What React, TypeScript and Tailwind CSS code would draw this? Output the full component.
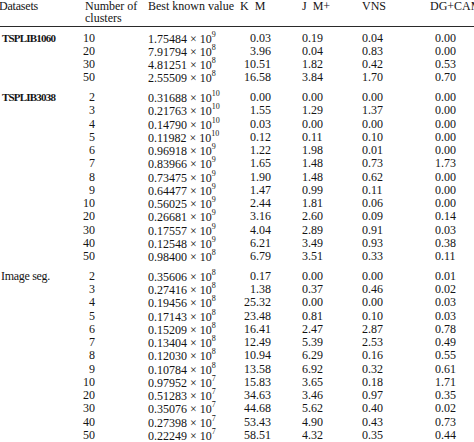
import React from "react";

type Row = [string, string, string, string, string, string, string];

const groups: { name: string; bold: boolean; rows: Row[] }[] = [
  {
    name: "TSPLIB1060",
    bold: true,
    rows: [
      ["10", "1.75484", "9", "0.03", "0.19", "0.04", "0.00"],
      ["20", "7.91794", "8", "3.96", "0.04", "0.83", "0.00"],
      ["30", "4.81251", "8", "10.51", "1.82", "0.42", "0.53"],
      ["50", "2.55509", "8", "16.58", "3.84", "1.70", "0.70"],
    ],
  },
  {
    name: "TSPLIB3038",
    bold: true,
    rows: [
      ["2", "0.31688", "10", "0.00", "0.00", "0.00", "0.00"],
      ["3", "0.21763", "10", "1.55", "1.29", "1.37", "0.00"],
      ["4", "0.14790", "10", "0.03", "0.00", "0.00", "0.00"],
      ["5", "0.11982", "10", "0.12", "0.11", "0.10", "0.00"],
      ["6", "0.96918", "9", "1.22", "1.98", "0.01", "0.00"],
      ["7", "0.83966", "9", "1.65", "1.48", "0.73", "1.73"],
      ["8", "0.73475", "9", "1.90", "1.48", "0.62", "0.00"],
      ["9", "0.64477", "9", "1.47", "0.99", "0.11", "0.00"],
      ["10", "0.56025", "9", "2.44", "1.81", "0.06", "0.00"],
      ["20", "0.26681", "9", "3.16", "2.60", "0.09", "0.14"],
      ["30", "0.17557", "9", "4.04", "2.89", "0.91", "0.03"],
      ["40", "0.12548", "9", "6.21", "3.49", "0.93", "0.38"],
      ["50", "0.98400", "8", "6.79", "3.51", "0.33", "0.11"],
    ],
  },
  {
    name: "Image seg.",
    bold: false,
    rows: [
      ["2", "0.35606", "8", "0.17", "0.00", "0.00", "0.01"],
      ["3", "0.27416", "8", "1.38", "0.37", "0.46", "0.02"],
      ["4", "0.19456", "8", "25.32", "0.00", "0.00", "0.03"],
      ["5", "0.17143", "8", "23.48", "0.81", "0.10", "0.03"],
      ["6", "0.15209", "8", "16.41", "2.47", "2.87", "0.78"],
      ["7", "0.13404", "8", "12.49", "5.39", "2.53", "0.49"],
      ["8", "0.12030", "8", "10.94", "6.29", "0.16", "0.55"],
      ["9", "0.10784", "8", "13.58", "6.92", "0.32", "0.61"],
      ["10", "0.97952", "7", "15.83", "3.65", "0.18", "1.71"],
      ["20", "0.51283", "7", "34.63", "3.46", "0.97", "0.35"],
      ["30", "0.35076", "7", "44.68", "5.62", "0.40", "0.02"],
      ["40", "0.27398", "7", "53.43", "4.90", "0.43", "0.73"],
      ["50", "0.22249", "7", "58.51", "4.32", "0.35", "0.44"],
    ],
  },
];

const cols = "grid grid-cols-[84px_64px_92px_62px_60px_68px_1fr]";

export default function App() {
  return (
    <div className="w-[474px] h-[442px] overflow-hidden bg-white text-[#141414] text-[12px] font-['Liberation_Serif','Times_New_Roman',serif]">
      <div className={`${cols} leading-[12px] whitespace-nowrap`}>
        <div className="-ml-[1px] tracking-[-0.2px]">Datasets</div>
        <div className="pl-[1px]">
          <div>Number of</div>
          <div>clusters</div>
        </div>
        <div>Best known value</div>
        <div>K&nbsp;&nbsp;M</div>
        <div>J&nbsp;&nbsp;M+</div>
        <div>VNS</div>
        <div>DG+CAM</div>
      </div>
      <div className="mt-[2px] h-px bg-[#2a2a2a] w-full" />
      <div className="pt-[4.7px]">
        {groups.map((g, gi) => (
          <div key={g.name} className={gi > 0 ? "mt-[6.5px]" : ""}>
            {g.rows.map((r, ri) => (
              <div
                key={ri}
                className={`${cols} h-[13.25px] leading-[13.25px] whitespace-nowrap`}
              >
                <div
                  className={
                    g.bold
                      ? "pl-[2px] font-bold text-[11px] tracking-[-0.8px]"
                      : "pl-[1px] tracking-[-0.3px]"
                  }
                >
                  {ri === 0 ? g.name : ""}
                </div>
                <div className="flex">
                  <div className="w-[11px] flex justify-end">{r[0]}</div>
                </div>
                <div>
                  {r[1]} × 10
                  <sup className="text-[8px] relative -top-[1px] align-super leading-none">
                    {r[2]}
                  </sup>
                </div>
                <div className="flex">
                  <div className="w-[31px] flex justify-end">{r[3]}</div>
                </div>
                <div>{r[4]}</div>
                <div>{r[5]}</div>
                <div className="pl-[5px]">{r[6]}</div>
              </div>
            ))}
          </div>
        ))}
      </div>
    </div>
  );
}
